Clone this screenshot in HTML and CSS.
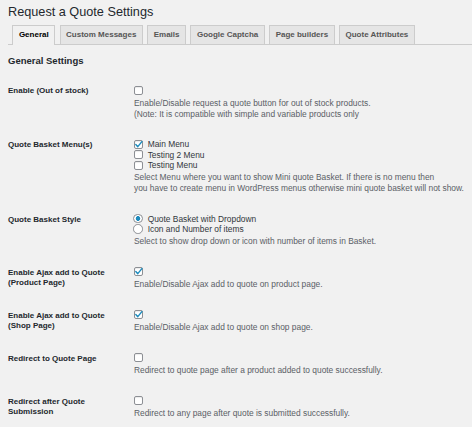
FILE: index.html
```html
<!DOCTYPE html>
<html lang="en">
<head>
<meta charset="utf-8">
<title>Request a Quote Settings</title>
<link rel="stylesheet" href="styles.css">
</head>
<body>
<div class="wrap">
  <h1 class="title">Request a Quote Settings</h1>
  <nav class="tabs">
    <a class="tab active">General</a>
    <a class="tab">Custom Messages</a>
    <a class="tab">Emails</a>
    <a class="tab">Google Captcha</a>
    <a class="tab">Page builders</a>
    <a class="tab">Quote Attributes</a>
  </nav>
  <h2 class="section">General Settings</h2>
  <div class="form">
    <div class="row">
      <div class="label">Enable (Out of stock)</div>
      <div class="field">
        <div class="line"><span class="cb"></span></div>
        <p class="desc">Enable/Disable request a quote button for out of stock products.<br>(Note: It is compatible with simple and variable products only</p>
      </div>
    </div>
    <div class="row">
      <div class="label">Quote Basket Menu(s)</div>
      <div class="field">
        <div class="line opt"><span class="cb checked"><svg viewBox="0 0 10 10"><path d="M2 5 L4.2 7.4 L8.8 1.8"/></svg></span>Main Menu</div>
        <div class="line opt"><span class="cb"></span>Testing 2 Menu</div>
        <div class="line opt"><span class="cb"></span>Testing Menu</div>
        <p class="desc">Select Menu where you want to show Mini quote Basket. If there is no menu then<br>you have to create menu in WordPress menus otherwise mini quote basket will not show.</p>
      </div>
    </div>
    <div class="row">
      <div class="label">Quote Basket Style</div>
      <div class="field">
        <div class="line opt"><span class="radio on"></span>Quote Basket with Dropdown</div>
        <div class="line opt"><span class="radio"></span>Icon and Number of items</div>
        <p class="desc">Select to show drop down or icon with number of items in Basket.</p>
      </div>
    </div>
    <div class="row">
      <div class="label">Enable Ajax add to Quote (Product Page)</div>
      <div class="field">
        <div class="line"><span class="cb checked"><svg viewBox="0 0 10 10"><path d="M2 5 L4.2 7.4 L8.8 1.8"/></svg></span></div>
        <p class="desc">Enable/Disable Ajax add to quote on product page.</p>
      </div>
    </div>
    <div class="row">
      <div class="label">Enable Ajax add to Quote (Shop Page)</div>
      <div class="field">
        <div class="line"><span class="cb checked"><svg viewBox="0 0 10 10"><path d="M2 5 L4.2 7.4 L8.8 1.8"/></svg></span></div>
        <p class="desc">Enable/Disable Ajax add to quote on shop page.</p>
      </div>
    </div>
    <div class="row">
      <div class="label">Redirect to Quote Page</div>
      <div class="field">
        <div class="line"><span class="cb"></span></div>
        <p class="desc">Redirect to quote page after a product added to quote successfully.</p>
      </div>
    </div>
    <div class="row">
      <div class="label">Redirect after Quote Submission</div>
      <div class="field">
        <div class="line"><span class="cb"></span></div>
        <p class="desc">Redirect to any page after quote is submitted successfully.</p>
      </div>
    </div>
  </div>
</div>
</body>
</html>
```
FILE: styles.css
```css
html, body {
  margin: 0;
  padding: 0;
  background: #ffffff;
}
body {
  font-family: "Liberation Sans", Arial, sans-serif;
  color: #23282d;
}
.wrap {
  width: 472px;
  height: 427px;
  overflow: hidden;
  background: #f1f1f1;
  padding-left: 8px;
  box-sizing: border-box;
}
.title {
  margin: 0;
  padding-top: 3.7px;
  font-size: 12.7px;
  line-height: 16px;
  font-weight: 400;
  color: #23282d;
}
.tabs {
  display: flex;
  align-items: flex-end;
  margin-top: 5.3px;
  border-bottom: 1px solid #cccccc;
}
.tab {
  margin-left: 4.4px;
  padding: 3px 5.5px;
  border: 1px solid #cccccc;
  border-bottom: 0;
  background: #e5e5e5;
  color: #555555;
  font-size: 8px;
  line-height: 12px;
  font-weight: 700;
  white-space: nowrap;
}
.tab.active {
  background: #f1f1f1;
  color: #000000;
  margin-bottom: -1px;
  padding-bottom: 4px;
}
.section {
  margin: 10px 0 8.5px;
  font-size: 9.5px;
  line-height: 12px;
  font-weight: 700;
  color: #23282d;
}
.row {
  display: grid;
  grid-template-columns: 126px 1fr;
}
.label {
  padding: 11px 8px 11px 0;
  font-size: 8px;
  line-height: 10.5px;
  font-weight: 700;
  color: #23282d;
}
.field {
  padding: 9.5px 0;
}
.line {
  height: 11px;
  display: flex;
  align-items: center;
  font-size: 8.4px;
  color: #32373c;
  white-space: nowrap;
}
.line.opt {
  height: 10.5px;
}
.cb {
  width: 9px;
  height: 9px;
  box-sizing: border-box;
  border: 1px solid #8c8f94;
  border-radius: 2px;
  background: #ffffff;
  box-shadow: inset 0 1px 1px rgba(0, 0, 0, 0.08);
  margin-right: 4.7px;
  flex: none;
  display: flex;
  align-items: center;
  justify-content: center;
}
.cb svg {
  width: 9px;
  height: 9px;
  flex: none;
}
.cb svg path {
  fill: none;
  stroke: #1e8cbe;
  stroke-width: 1.6;
  stroke-linecap: round;
  stroke-linejoin: round;
}
.radio {
  width: 9.5px;
  height: 9.5px;
  box-sizing: border-box;
  border: 1px solid #8c8f94;
  border-radius: 50%;
  background: #ffffff;
  margin-left: -1px;
  margin-right: 5.2px;
  flex: none;
}
.radio.on {
  background: radial-gradient(circle, #1e8cbe 0, #1e8cbe 2.1px, #ffffff 2.6px);
}
.desc {
  margin: 2px 0 0;
  font-size: 8.4px;
  line-height: 11px;
  color: #5a6066;
  white-space: nowrap;
}
```
